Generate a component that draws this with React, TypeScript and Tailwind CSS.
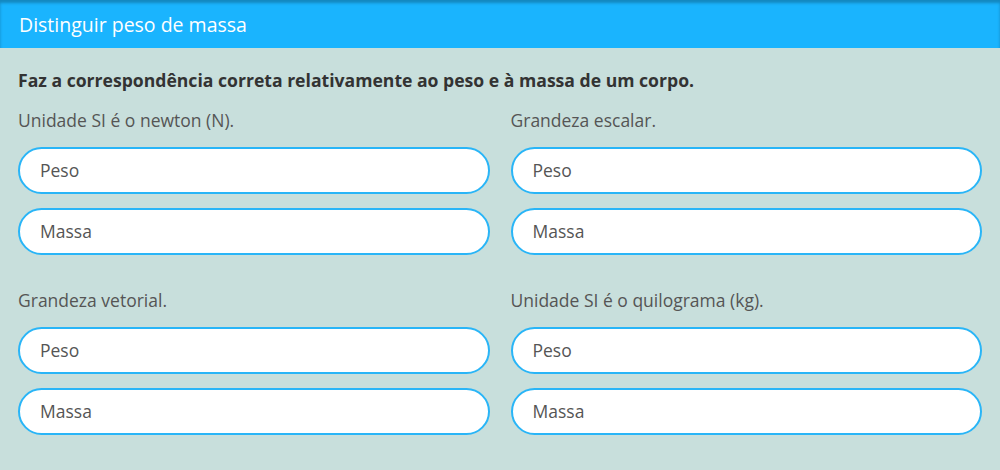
import { useState } from "react";

const items = [
    { label: "Unidade SI é o newton (N)." },
    { label: "Grandeza escalar." },
    { label: "Grandeza vetorial." },
    { label: "Unidade SI é o quilograma (kg)." },
];

const options = ["Peso", "Massa"];

const App = () => {
    const [picked, setPicked] = useState<Record<number, string>>({});

    return (
        <div
            className="min-h-[470px] w-full bg-[#c8dfdc]"
            style={{ fontFamily: '"Open Sans", "Liberation Sans", sans-serif' }}
        >
            <header className="flex h-[48px] items-center bg-[#1ab4fe] px-[19px] shadow-[inset_0_3px_3px_rgba(0,0,0,0.25)]">
                <h1 className="pt-[2px] text-[19.5px] text-white">Distinguir peso de massa</h1>
            </header>
            <main className="px-[18px] pt-[20px]">
                <p className="text-[17.6px] leading-[24px] font-bold text-[#333]">
                    Faz a correspondência correta relativamente ao peso e à massa de um corpo.
                </p>
                <div className="mt-[16px] grid grid-cols-2 gap-x-[21px] gap-y-[33px]">
                    {items.map((item, i) => (
                        <div key={i} className="flex flex-col">
                            <span className="text-[17.5px] leading-[24px] text-[#555]">{item.label}</span>
                            <div className="mt-[15px] flex flex-col gap-[14px]">
                                {options.map((opt) => (
                                    <button
                                        key={opt}
                                        onClick={() => setPicked({ ...picked, [i]: opt })}
                                        className={
                                            "h-[47px] rounded-full border-2 border-[#29b5f7] pl-[20px] text-left text-[17.5px] text-[#555] " +
                                            (picked[i] === opt ? "bg-[#e3f5fe]" : "bg-white")
                                        }
                                    >
                                        {opt}
                                    </button>
                                ))}
                            </div>
                        </div>
                    ))}
                </div>
            </main>
        </div>
    );
};

export default App;
